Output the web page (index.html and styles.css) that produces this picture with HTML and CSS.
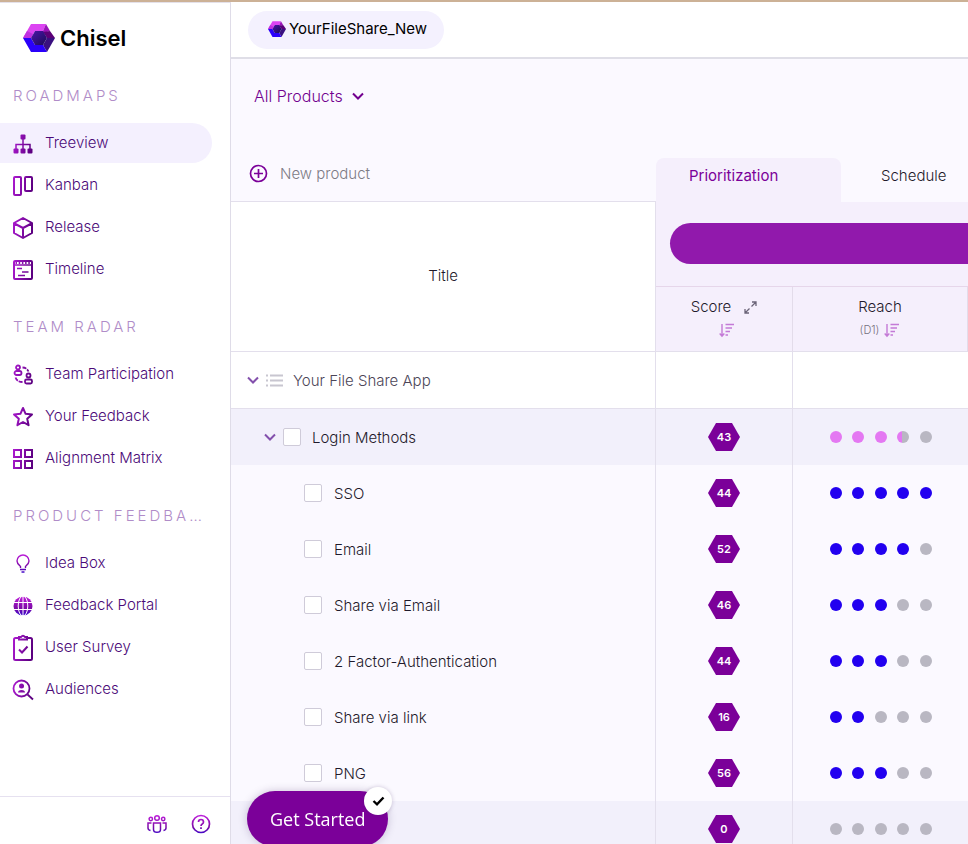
FILE: index.html
```html
<!DOCTYPE html>
<html lang="en">
<head>
  <meta charset="UTF-8">
  <meta name="viewport" content="width=device-width, initial-scale=1.0">
  <title>Chisel - Treeview</title>
  <link rel="stylesheet" href="styles.css">
</head>
<body>
  <!-- Shared gradients and symbols -->
  <svg class="defs" width="0" height="0" aria-hidden="true">
    <defs>
      <linearGradient id="side" gradientUnits="userSpaceOnUse" x1="0" y1="0" x2="22" y2="4">
        <stop offset="0" stop-color="#b21bd6"/>
        <stop offset="1" stop-color="#5c0080"/>
      </linearGradient>
      <linearGradient id="down" gradientUnits="userSpaceOnUse" x1="0" y1="0" x2="0" y2="22">
        <stop offset="0" stop-color="#c41fe0"/>
        <stop offset="0.6" stop-color="#7d0aa6"/>
        <stop offset="1" stop-color="#2a08d8"/>
      </linearGradient>
      <linearGradient id="shade" x1="0" y1="0" x2="1" y2="1">
        <stop offset="0" stop-color="#4a16a8"/>
        <stop offset="1" stop-color="#1c0a58"/>
      </linearGradient>
      <symbol id="logo" viewBox="0 0 32 28">
        <path fill="#dc44f2" d="M8 0h15l-3 7h-8l-4 7H0z"/>
        <path fill="#9a14b8" d="M23 0l4 7-7 2v-2z"/>
        <path fill="#5c0078" d="M27 7l5 7h-8l-4-6z"/>
        <path fill="#3a1080" d="M32 14l-8 14-4-7 4-7z"/>
        <path fill="#2a00fa" d="M0 14h8l4 7h8l4 7H8z"/>
        <path fill="#c030e0" d="M0 14l4-7 6 3-2 4z"/>
        <path fill="url(#shade)" d="M12 7h8l4 7-4 7h-8l-4-7z"/>
      </symbol>
      <symbol id="chevron" viewBox="0 0 12 8">
        <path d="M1 1.500l5 5 5-5" fill="none" stroke="currentColor" stroke-width="2"/>
      </symbol>
      <symbol id="sort" viewBox="0 0 16 15">
        <path d="M3 1v12M.7 10.500L3 13.200l2.300-2.700M6.500 1.500H15M6.500 5h6.500M6.500 8.500h4.500M6.500 12h2.500" fill="none" stroke="currentColor" stroke-width="1.400"/>
      </symbol>
    </defs>
  </svg>

  <div class="app">
    <aside class="sidebar">
      <a class="brand" href="#">
        <svg width="32" height="28"><use href="#logo"/></svg>
        <span>Chisel</span>
      </a>

      <nav>
        <section class="nav-group">
          <h2>ROADMAPS</h2>
          <a class="nav-item active" href="#">
            <svg width="22" height="22" viewBox="0 0 22 22" fill="url(#side)">
              <rect x="8.500" y="1.500" width="5" height="5" rx="1"/>
              <rect x="1.500" y="15.500" width="5" height="5" rx="1"/>
              <rect x="8.500" y="15.500" width="5" height="5" rx="1"/>
              <rect x="15.500" y="15.500" width="5" height="5" rx="1"/>
              <path d="M11 6v10M4 16v-4.500h14V16" fill="none" stroke="url(#side)" stroke-width="1.500"/>
            </svg>
            Treeview
          </a>
          <a class="nav-item" href="#">
            <svg width="22" height="22" viewBox="0 0 22 22" fill="none" stroke="url(#side)" stroke-width="2">
              <rect x="2" y="2" width="7" height="18" rx="1"/>
              <rect x="13" y="2" width="7" height="14" rx="1"/>
            </svg>
            Kanban
          </a>
          <a class="nav-item" href="#">
            <svg width="22" height="22" viewBox="0 0 22 22" fill="none" stroke="url(#side)" stroke-width="2" stroke-linejoin="round">
              <path d="M11 1l9 5v10l-9 5-9-5V6zM2.500 6.500L11 11l8.500-4.500M11 11v9.500"/>
            </svg>
            Release
          </a>
          <a class="nav-item" href="#">
            <svg width="22" height="22" viewBox="0 0 22 22" fill="none" stroke="url(#side)" stroke-width="2">
              <rect x="2" y="2" width="18" height="18" rx="1"/>
              <path d="M2 6h18" stroke-width="1.500"/>
              <path d="M3.500 4h15" stroke-width="2" stroke-dasharray="1.500 1.700"/>
              <path d="M5 9.500h5M10 13h6.500M6 16.500h7" stroke-width="1.500"/>
            </svg>
            Timeline
          </a>
        </section>

        <section class="nav-group">
          <h2>TEAM RADAR</h2>
          <a class="nav-item" href="#">
            <svg width="22" height="22" viewBox="0 0 22 22" fill="none" stroke="url(#side)" stroke-width="1.800">
              <circle cx="6" cy="3.500" r="2"/>
              <rect x="2.500" y="7" width="7" height="4" rx="2"/>
              <circle cx="16.500" cy="11.500" r="2"/>
              <rect x="13" y="15.500" width="7" height="4" rx="1.500"/>
              <path d="M10.500 3.500c3 0 5 1.500 6 4M3.500 13.500c1 3 3.500 4.500 7 4.500" stroke-dasharray="4 1"/>
            </svg>
            Team Participation
          </a>
          <a class="nav-item" href="#">
            <svg width="22" height="22" viewBox="0 0 22 22" fill="none" stroke="url(#side)" stroke-width="2" stroke-linejoin="round">
              <path d="M11 2l2.600 5.800 6.400.7-4.800 4.300 1.400 6.400L11 16l-5.600 3.200 1.400-6.400L2 8.500l6.400-.7z"/>
            </svg>
            Your Feedback
          </a>
          <a class="nav-item" href="#">
            <svg width="22" height="22" viewBox="0 0 22 22" fill="none" stroke="url(#side)" stroke-width="2">
              <rect x="2" y="2" width="7" height="7"/>
              <rect x="13" y="2" width="7" height="7"/>
              <rect x="2" y="13" width="7" height="7"/>
              <rect x="13" y="13" width="7" height="7"/>
            </svg>
            Alignment Matrix
          </a>
        </section>

        <section class="nav-group">
          <h2>PRODUCT FEEDBA…</h2>
          <a class="nav-item" href="#">
            <svg width="22" height="22" viewBox="0 0 22 22" fill="none" stroke="url(#down)" stroke-width="1.400">
              <path d="M8.500 15v-1.500C7 12 5 10.500 5 8a6 6 0 0 1 12 0c0 2.500-2 4-3.500 5.500V15M8 16.500h6M9.500 19h3"/>
            </svg>
            Idea Box
          </a>
          <a class="nav-item" href="#">
            <svg width="22" height="22" viewBox="0 0 22 22">
              <circle cx="11" cy="11" r="9.500" fill="url(#down)"/>
              <path d="M1 7.500h20M1 14.500h20M11 1v20" fill="none" stroke="#fff"/>
              <ellipse cx="11" cy="11" rx="4.800" ry="10" fill="none" stroke="#fff"/>
            </svg>
            Feedback Portal
          </a>
          <a class="nav-item" href="#">
            <svg width="22" height="28" viewBox="0 0 22 28" fill="none" stroke="url(#side)" stroke-width="2">
              <path d="M7 4H3.500Q2 4 2 5.500v19Q2 26 3.500 26h15q1.500 0 1.500-1.500v-19Q20 4 18.500 4H15"/>
              <path d="M7 5V3h2q2-2.500 4 0h2v2.500H7z"/>
              <path d="M7 15.500l3 3 5.500-6"/>
            </svg>
            User Survey
          </a>
          <a class="nav-item" href="#">
            <svg width="22" height="22" viewBox="0 0 22 22" fill="none" stroke="url(#side)" stroke-width="1.800">
              <circle cx="9.500" cy="9.500" r="8"/>
              <path d="M15.500 15.500l5.500 5"/>
              <circle cx="9.500" cy="7" r="2.500" fill="url(#side)" stroke="none"/>
              <path d="M6 13.500q0-2.500 3.500-2.500t3.500 2.500z" fill="url(#side)" stroke="none"/>
            </svg>
            Audiences
          </a>
        </section>
      </nav>

      <footer class="side-footer">
        <button type="button" aria-label="Team">
          <svg width="20" height="20" viewBox="0 0 20 20" fill="none" stroke="url(#down)" stroke-width="1.500">
            <circle cx="10" cy="4" r="2.300"/>
            <circle cx="3.800" cy="5" r="1.700"/>
            <circle cx="16.200" cy="5" r="1.700"/>
            <path d="M6.500 9h7v6.500q0 2.800-3.500 2.800t-3.500-2.800zM4.500 9H1v5q0 2 2.500 2.500M15.500 9H19v5q0 2-2.500 2.500"/>
          </svg>
        </button>
        <button type="button" aria-label="Help">
          <svg width="20" height="20" viewBox="0 0 20 20" fill="none" stroke="url(#down)" stroke-width="1.700">
            <circle cx="10" cy="10" r="8.500"/>
            <path d="M7.500 8q0-2.500 2.500-2.500T12.500 8q0 1.200-1.300 2-1.200.7-1.200 2M10 13.300v1.700"/>
          </svg>
        </button>
      </footer>
    </aside>

    <main class="main">
      <header class="topbar">
        <a class="workspace" href="#">
          <svg width="18" height="16"><use href="#logo"/></svg>
          YourFileShare_New
        </a>
      </header>

      <div class="toolbar">
        <label class="product-filter">
          <select aria-label="Product">
            <option>All Products</option>
          </select>
          <svg width="12" height="8"><use href="#chevron"/></svg>
        </label>
      </div>

      <div class="board-head">
        <div class="new-product">
          <button type="button">
            <svg width="19" height="19" viewBox="0 0 19 19" fill="none" stroke="#7b0099" stroke-width="1.700">
              <circle cx="9.500" cy="9.500" r="8"/>
              <path d="M9.500 5v9M5 9.500h9"/>
            </svg>
            New product
          </button>
        </div>
        <div class="tabs">
          <button type="button" class="tab selected">Prioritization</button>
          <button type="button" class="tab">Schedule</button>
        </div>
      </div>

      <table class="board">
        <colgroup>
          <col>
          <col class="col-score">
          <col class="col-reach">
        </colgroup>
        <thead>
          <tr>
            <th class="title" rowspan="2">Title</th>
            <td class="panel" colspan="2"><div class="banner"></div></td>
          </tr>
          <tr>
            <th class="metric">
              <div class="metric-name">Score
                <svg width="13" height="13" viewBox="0 0 13 13" fill="none" stroke="#6b6478" stroke-width="1.300">
                  <path d="M8 1h4v4M12 1L7.500 5.500M5 12H1V8M1 12l4.500-4.500"/>
                </svg>
              </div>
              <div class="metric-sort"><svg width="16" height="15"><use href="#sort"/></svg></div>
            </th>
            <th class="metric last">
              <div class="metric-name">Reach</div>
              <div class="metric-sort">(D1) <svg width="16" height="15"><use href="#sort"/></svg></div>
            </th>
          </tr>
        </thead>
        <tbody>
          <tr class="product">
            <td>
              <div class="cell">
                <svg class="toggle" width="12" height="8"><use href="#chevron"/></svg>
                <svg width="17" height="13" viewBox="0 0 17 13" fill="none" stroke="#c8c6d0" stroke-width="2">
                  <path d="M0 1.500h2M4 1.500h13M0 6.500h2M4 6.500h13M0 11.500h2M4 11.500h13"/>
                </svg>
                <span>Your File Share App</span>
              </div>
            </td>
            <td></td>
            <td></td>
          </tr>
          <tr class="group">
            <td>
              <label class="cell">
                <svg class="toggle" width="12" height="8"><use href="#chevron"/></svg>
                <input type="checkbox">Login Methods
              </label>
            </td>
            <td><div class="score">43</div></td>
            <td><div class="dots pink"><i class="on"></i><i class="on"></i><i class="on"></i><i class="part"></i><i></i></div></td>
          </tr>
          <tr>
            <td><label class="cell"><input type="checkbox">SSO</label></td>
            <td><div class="score">44</div></td>
            <td><div class="dots"><i class="on"></i><i class="on"></i><i class="on"></i><i class="on"></i><i class="on"></i></div></td>
          </tr>
          <tr>
            <td><label class="cell"><input type="checkbox">Email</label></td>
            <td><div class="score">52</div></td>
            <td><div class="dots"><i class="on"></i><i class="on"></i><i class="on"></i><i class="on"></i><i></i></div></td>
          </tr>
          <tr>
            <td><label class="cell"><input type="checkbox">Share via Email</label></td>
            <td><div class="score">46</div></td>
            <td><div class="dots"><i class="on"></i><i class="on"></i><i class="on"></i><i></i><i></i></div></td>
          </tr>
          <tr>
            <td><label class="cell"><input type="checkbox">2 Factor-Authentication</label></td>
            <td><div class="score">44</div></td>
            <td><div class="dots"><i class="on"></i><i class="on"></i><i class="on"></i><i></i><i></i></div></td>
          </tr>
          <tr>
            <td><label class="cell"><input type="checkbox">Share via link</label></td>
            <td><div class="score">16</div></td>
            <td><div class="dots"><i class="on"></i><i class="on"></i><i></i><i></i><i></i></div></td>
          </tr>
          <tr>
            <td><label class="cell"><input type="checkbox">PNG</label></td>
            <td><div class="score">56</div></td>
            <td><div class="dots"><i class="on"></i><i class="on"></i><i class="on"></i><i></i><i></i></div></td>
          </tr>
          <tr class="group">
            <td></td>
            <td><div class="score">0</div></td>
            <td><div class="dots"><i></i><i></i><i></i><i></i><i></i></div></td>
          </tr>
        </tbody>
      </table>
    </main>
  </div>

  <button type="button" class="get-started">
    Get Started
    <span class="badge">
      <svg width="13" height="10" viewBox="0 0 13 10"><path d="M1.500 5l3.500 3.300L11.500 1.500" fill="none" stroke="#000" stroke-width="2.400"/></svg>
    </span>
  </button>
</body>
</html>
```
FILE: styles.css
```css
* {
  margin: 0;
  padding: 0;
  box-sizing: border-box;
}

body {
  height: 100vh;
  overflow: hidden;
  border-top: 2px solid #ccb196;
  font-family: Inter, "Liberation Sans", sans-serif;
  font-size: 15px;
  font-weight: 300;
  color: #1f1a2b;
  background: #fff;
}

button,
select,
input {
  font: inherit;
  color: inherit;
  border: none;
  background: none;
  cursor: pointer;
}

a {
  color: inherit;
  text-decoration: none;
}

svg {
  display: block;
  flex-shrink: 0;
}

.defs {
  position: absolute;
}

.app {
  display: flex;
  height: 100%;
}

/* Sidebar */
.sidebar {
  display: flex;
  flex-direction: column;
  width: 231px;
  flex-shrink: 0;
  border-top: 1px solid #e4e1ea;
  border-right: 1px solid #dfdce8;
}

.brand {
  display: flex;
  align-items: center;
  gap: 5px;
  height: 70px;
  padding-left: 23px;
  margin-bottom: 11px;
  font-size: 22px;
  font-weight: 600;
  color: #000;
}

.nav-group {
  margin-bottom: 26px;
}

.nav-group h2 {
  margin: 0 0 15px 13px;
  white-space: nowrap;
  font-size: 15px;
  font-weight: 300;
  line-height: 24px;
  letter-spacing: 3px;
  color: #b08cc8;
}

.nav-item {
  display: flex;
  align-items: center;
  gap: 11px;
  height: 40px;
  margin: 0 18px 2px 0;
  padding: 0 0 2px 12px;
  border-radius: 0 20px 20px 0;
  color: #4b0a78;
}

.nav-item svg {
  margin-top: 3px;
}

.nav-item.active {
  background: #f4f0fe;
}

.nav-group .nav-item:last-child {
  margin-bottom: 0;
}

.side-footer {
  display: flex;
  justify-content: flex-end;
  align-items: center;
  gap: 24px;
  height: 48px;
  margin-top: auto;
  padding: 6px 19px 0 0;
  border-top: 1px solid #e6e1f0;
}

/* Main area */
.main {
  flex: 1;
  min-width: 0;
  background: #fbf9ff;
}

.topbar {
  height: 57px;
  padding: 9px 17px;
  background: #fff;
  border-bottom: 2px solid #dfdee7;
}

.workspace {
  display: inline-flex;
  align-items: center;
  gap: 3px;
  height: 38px;
  padding: 0 17px 3px 20px;
  border-radius: 19px;
  font-weight: 400;
  color: #000;
  background: #f4f1fe;
}

.toolbar {
  padding: 25px 23px 50px;
}

.product-filter {
  display: inline-flex;
  align-items: center;
  height: 24px;
  color: #72008f;
  vertical-align: top;
}

.product-filter select {
  appearance: none;
  padding-right: 22px;
  font-size: 16px;
}

.product-filter svg {
  margin-left: -13px;
  pointer-events: none;
}

.board-head {
  display: grid;
  grid-template-columns: 1fr 312px;
  height: 44px;
}

.new-product {
  padding-left: 18px;
  border-bottom: 1px solid #e3dfec;
}

.new-product button {
  display: flex;
  align-items: center;
  gap: 12px;
  height: 30px;
  color: #7d7b85;
}

.tabs {
  display: flex;
}

.tab {
  flex-shrink: 0;
  padding: 0 40px 10px;
  white-space: nowrap;
}

.tab.selected {
  width: 185px;
  padding: 0 33px 10px;
  text-align: left;
  border-radius: 8px 8px 0 0;
  font-weight: 400;
  color: #7b0099;
  background: #f5effc;
}

/* Board table */
.board {
  width: 100%;
  table-layout: fixed;
  border-collapse: separate;
  border-spacing: 0;
}

.col-score {
  width: 137px;
}

.col-reach {
  width: 175px;
}

.board th {
  font-weight: 300;
}

.board .title {
  padding-bottom: 2px;
  background: #fff;
  border-right: 1px solid #e3dfec;
  border-bottom: 1px solid #e3dfec;
}

.board .panel {
  height: 85px;
  padding: 0 0 2px 14px;
  background: #f5effc;
  border-right: none;
  border-bottom: 1px solid #e6d6ea;
}

.banner {
  height: 41px;
  border-radius: 21px 0 0 21px;
  background: #9119ac;
}

.metric {
  height: 65px;
  padding-bottom: 2px;
  background: #f5effc;
  border-right: 1px solid #e3dcea;
  border-bottom: 1px solid #e3dfec;
}

.metric-name,
.metric-sort {
  display: flex;
  justify-content: center;
  align-items: center;
}

.metric-name {
  gap: 13px;
  line-height: 24px;
}

.metric-sort {
  gap: 5px;
  height: 22px;
  padding-left: 6px;
  font-size: 11px;
  color: #77717f;
}

.metric-sort svg {
  color: #c47ad6;
}

.metric.last .metric-sort {
  padding-left: 0;
}

.board tbody td {
  height: 56px;
}

.board tbody td:not(:last-child) {
  border-right: 1px solid #e3dfec;
}

.board .product td {
  height: 57px;
  background: #fff;
  border-bottom: 1px solid #e3dfec;
}

.board .group td {
  background: #f2f0fb;
}

.cell {
  display: flex;
  align-items: center;
  gap: 12px;
  padding-left: 73px;
}

.product .cell {
  gap: 7px;
  padding-left: 16px;
  color: #4c4658;
}

.product .cell span {
  padding-left: 3px;
}

.group .cell {
  gap: 11px;
  padding-left: 33px;
}

.group .toggle {
  margin-right: -4px;
}

.toggle {
  color: #8350ac;
}

.cell input {
  appearance: none;
  width: 18px;
  height: 18px;
  border: 1px solid #cfcbd9;
  border-radius: 2px;
  background: #fff;
}

.cell input:checked {
  background: #7b0099;
}

.score {
  width: 32px;
  height: 28px;
  margin: 0 auto;
  clip-path: polygon(25% 0, 75% 0, 100% 50%, 75% 100%, 25% 100%, 0 50%);
  font-size: 11px;
  font-weight: 600;
  line-height: 28px;
  text-align: center;
  color: #fff;
  background: #7b0099;
}

.dots {
  display: flex;
  justify-content: space-between;
  width: 102px;
  margin: 0 auto;
}

.dots i {
  width: 12px;
  height: 12px;
  border-radius: 50%;
  background: #b9b7c2;
}

.dots .on {
  background: #2200f0;
}

.dots.pink .on {
  background: #e478f2;
}

.dots.pink .part {
  background: linear-gradient(90deg, #e478f2 40%, #b9b7c2 40%);
}

/* Floating button */
.get-started {
  position: fixed;
  left: 247px;
  bottom: -3px;
  height: 56px;
  padding: 0 23px;
  border-radius: 28px;
  font-family: "Open Sans", "Noto Sans", sans-serif;
  font-size: 18px;
  font-weight: 400;
  color: #fff;
  background: #7b0099;
  box-shadow: 0 0 8px rgba(60, 30, 90, 0.25);
}

.badge {
  position: absolute;
  top: -4px;
  right: -4px;
  display: flex;
  justify-content: center;
  align-items: center;
  width: 28px;
  height: 28px;
  border-radius: 50%;
  background: #fff;
  box-shadow: 0 0 4px rgba(60, 30, 90, 0.25);
}
```
